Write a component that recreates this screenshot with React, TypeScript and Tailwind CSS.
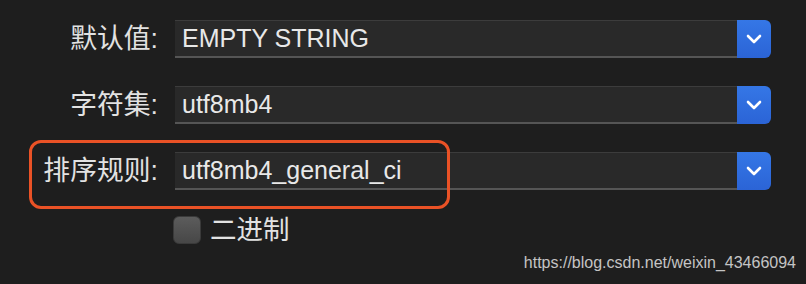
import React from 'react';

const font = { fontFamily: '"Liberation Sans", "Noto Sans CJK SC", sans-serif' };

function Chevron() {
    return (
        <svg width="16" height="10" viewBox="0 0 16 10" fill="none">
            <path d="M2 2 L8 8 L14 2" stroke="white" strokeWidth="2.6" strokeLinecap="round" strokeLinejoin="round" />
        </svg>
    );
}

function SelectRow({ label, value }: { label: string; value: string }) {
    return (
        <div className="flex items-center h-[38px]">
            <div className="w-[158px] text-right text-[26.8px] text-[#e2e2e2] leading-none">{label}</div>
            <div className="ml-[17px] flex h-[38px] flex-1">
                <div className="flex-1 flex items-center bg-[#292929] border-t border-t-[#3c3c3c] border-b-2 border-b-[#555555] pl-[7px]">
                    <span className="text-[25px] text-[#e8e8e8] leading-none">{value}</span>
                </div>
                <div className="w-[34px] flex items-center justify-center rounded-r-[6px] bg-gradient-to-b from-[#3577e6] to-[#2b64d6]">
                    <Chevron />
                </div>
            </div>
        </div>
    );
}

export default function App() {
    return (
        <div className="w-[806px] h-[284px] bg-[#1e1e1e] flex flex-col" style={font}>
            <div className="flex flex-col gap-[28px] pt-[20px] pr-[35px]">
                <SelectRow label="默认值:" value="EMPTY STRING" />
                <SelectRow label="字符集:" value="utf8mb4" />
                <div className="relative">
                    <SelectRow label="排序规则:" value="utf8mb4_general_ci" />
                    {/* annotation frame */}
                    <div className="absolute left-[29px] top-[-12px] w-[421px] h-[69px] border-[3px] border-[#ea5226] rounded-[12px] pointer-events-none" />
                </div>
            </div>
            <div className="flex items-center gap-[9px] pl-[173px] mt-[26px]">
                <div className="w-[28px] h-[28px] rounded-[6px] bg-gradient-to-b from-[#5c5c5c] to-[#474747] border border-[#3a3a3a]" />
                <span className="text-[26.5px] text-[#e2e2e2] leading-none">二进制</span>
            </div>
            <div className="flex justify-end pr-[10px] mt-[11px]">
                <span className="text-[16px] text-[#c4c4c4] leading-none">https://blog.csdn.net/weixin_43466094</span>
            </div>
        </div>
    );
}
